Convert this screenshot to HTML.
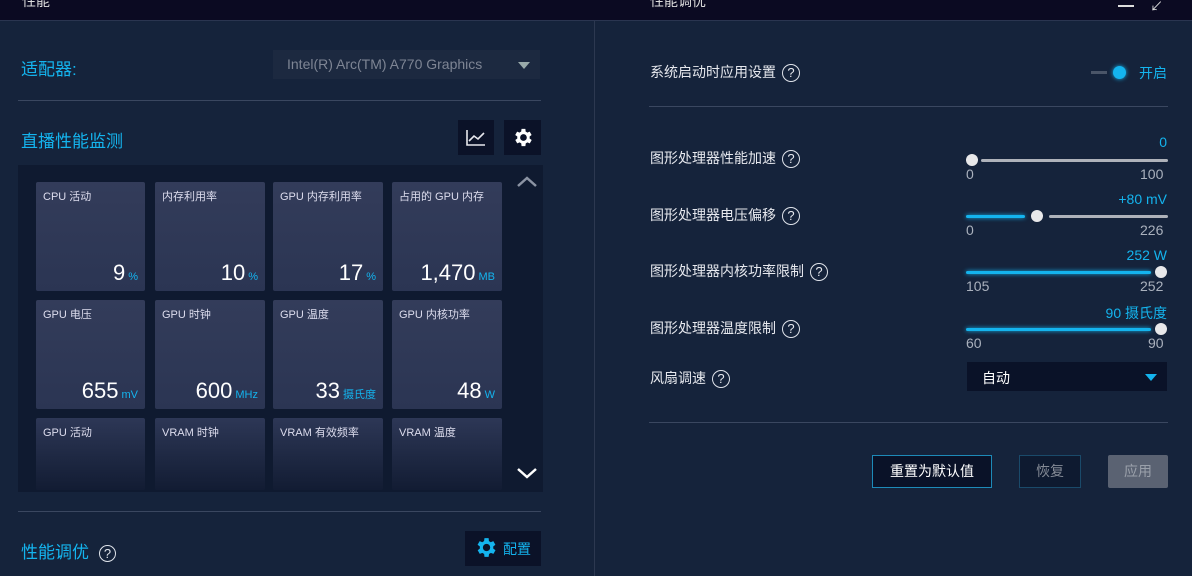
<!DOCTYPE html>
<html><head><meta charset="utf-8"><style>
*{margin:0;padding:0;box-sizing:border-box}
body{width:1192px;height:576px;background:#15233b;font-family:"Liberation Sans","Noto Sans CJK SC",sans-serif;color:#e6e8ee;position:relative;overflow:hidden}
.a{position:absolute}
.hdr{left:0;top:0;width:1192px;height:21px;background:#0b0a22;border-bottom:1px solid #2a3550}
.cy{color:#14b4ee}
.tile{position:absolute;width:110px;height:109px;background:linear-gradient(#333c5a,#2b3553);border-radius:2px}
.tile .t{position:absolute;left:7px;top:6px;font-size:11px;color:#dde}
.tile .v{position:absolute;right:7px;bottom:5px;font-size:22px;color:#fff;white-space:nowrap}
.tile .v span{font-size:11px;color:#14b4ee;margin-left:3px}
.fade{background:linear-gradient(#2d3756,#121c33)}
.lbl{position:absolute;left:650px;font-size:14px;color:#e6e8ee}
.q{display:inline-block;width:18px;height:18px;border:1.5px solid #dfe3ea;border-radius:50%;text-align:center;font-size:13px;line-height:16px;margin-left:6px;vertical-align:middle}
.trk{position:absolute;height:3px;background:#aeb2ba;border-radius:2px}
.on{background:#14b4ee;box-shadow:0 0 4px #14b4ee}
.knob{position:absolute;width:12px;height:12px;border-radius:50%;background:#e8e8ea}
.n{position:absolute;font-size:14px;color:#aab1bd}
.nv{position:absolute;font-size:14px;color:#14b4ee;text-align:right;right:25px}
.line{position:absolute;height:1px;background:#3a4760}
</style></head><body>
<div class="a hdr"></div>
<div class="a" style="left:22px;top:-9px;font-size:14px;color:#ddd">性能</div>
<div class="a" style="left:650px;top:-9px;font-size:14px;color:#ddd">性能调优</div>
<div class="a" style="left:1118px;top:5px;width:16px;height:2px;background:#ddd"></div>
<div class="a" style="left:1150px;top:-4px;font-size:13px;color:#ddd">↙</div>
<div class="a" style="left:594px;top:21px;width:1px;height:555px;background:#2c3850"></div>

<div class="a cy" style="left:21px;top:55px;font-size:17px">适配器:</div>
<div class="a" style="left:273px;top:50px;width:267px;height:29px;background:#1c2940"></div>
<div class="a" style="left:287px;top:56px;font-size:14px;color:#7e8594">Intel(R) Arc(TM) A770 Graphics</div>
<div class="a" style="left:518px;top:62px;border-left:6px solid transparent;border-right:6px solid transparent;border-top:7px solid #9aa"></div>
<div class="line" style="left:18px;top:100px;width:523px"></div>

<div class="a cy" style="left:21px;top:127px;font-size:17px">直播性能监测</div>
<div class="a" style="left:458px;top:120px;width:36px;height:35px;background:#0b1228"></div>
<svg class="a" style="left:465px;top:128px" width="22" height="20" viewBox="0 0 22 20"><path d="M2 2V17H20M4 13l5-5 4 3 6-6" stroke="#e8e8ee" stroke-width="1.6" fill="none"/></svg>
<div class="a" style="left:504px;top:120px;width:37px;height:35px;background:#0b1228"></div>
<svg class="a" style="left:511px;top:126px" width="23" height="23" viewBox="0 0 24 24"><path fill="#fff" d="M19.4 13a7.5 7.5 0 000-2l2.1-1.6-2-3.5-2.5 1a7 7 0 00-1.7-1L15 3h-4l-.4 2.9a7 7 0 00-1.7 1l-2.5-1-2 3.5L6.6 11a7.5 7.5 0 000 2l-2.1 1.6 2 3.5 2.5-1a7 7 0 001.7 1L11 21h4l.4-2.9a7 7 0 001.7-1l2.5 1 2-3.5zM13 15.5A3.5 3.5 0 1113 8.5a3.5 3.5 0 010 7z"/></svg>

<div class="a" style="left:18px;top:165px;width:525px;height:327px;background:#0f1a30"></div>
<svg class="a" style="left:516px;top:174px" width="22" height="14"><path d="M2 12l9-8 9 8" stroke="#8b93a3" stroke-width="2.5" fill="none"/></svg>
<svg class="a" style="left:516px;top:466px" width="22" height="14"><path d="M2 3l9 8 9-8" stroke="#fff" stroke-width="2.5" fill="none"/></svg>

<div class="tile" style="left:36px;top:182px;width:109px"><div class="t">CPU 活动</div><div class="v">9<span>%</span></div></div>
<div class="tile" style="left:155px;top:182px"><div class="t">内存利用率</div><div class="v">10<span>%</span></div></div>
<div class="tile" style="left:273px;top:182px"><div class="t">GPU 内存利用率</div><div class="v">17<span>%</span></div></div>
<div class="tile" style="left:392px;top:182px"><div class="t">占用的 GPU 内存</div><div class="v">1,470<span>MB</span></div></div>
<div class="tile" style="left:36px;top:300px;width:109px"><div class="t">GPU 电压</div><div class="v">655<span>mV</span></div></div>
<div class="tile" style="left:155px;top:300px"><div class="t">GPU 时钟</div><div class="v">600<span>MHz</span></div></div>
<div class="tile" style="left:273px;top:300px"><div class="t">GPU 温度</div><div class="v">33<span>摄氏度</span></div></div>
<div class="tile" style="left:392px;top:300px"><div class="t">GPU 内核功率</div><div class="v">48<span>W</span></div></div>
<div class="tile fade" style="left:36px;top:418px;width:109px;height:72px"><div class="t">GPU 活动</div></div>
<div class="tile fade" style="left:155px;top:418px;height:72px"><div class="t">VRAM 时钟</div></div>
<div class="tile fade" style="left:273px;top:418px;height:72px"><div class="t">VRAM 有效频率</div></div>
<div class="tile fade" style="left:392px;top:418px;height:72px"><div class="t">VRAM 温度</div></div>

<div class="line" style="left:18px;top:511px;width:523px"></div>
<div class="a cy" style="left:21px;top:538px;font-size:17px">性能调优<span class="q" style="color:#dfe3ea;margin-left:10px;width:17px;height:17px;line-height:15px">?</span></div>
<div class="a" style="left:465px;top:531px;width:76px;height:35px;background:#0b1228"></div>
<svg class="a" style="left:473px;top:535px" width="25" height="25" viewBox="0 0 24 24"><path fill="#14b4ee" d="M19.4 13a7.5 7.5 0 000-2l2.1-1.6-2-3.5-2.5 1a7 7 0 00-1.7-1L15 3h-4l-.4 2.9a7 7 0 00-1.7 1l-2.5-1-2 3.5L6.6 11a7.5 7.5 0 000 2l-2.1 1.6 2 3.5 2.5-1a7 7 0 001.7 1L11 21h4l.4-2.9a7 7 0 001.7-1l2.5 1 2-3.5zM13 15.5A3.5 3.5 0 1113 8.5a3.5 3.5 0 010 7z"/></svg>
<div class="a cy" style="left:503px;top:539px;font-size:14px">配置</div>

<!-- right -->
<div class="lbl" style="top:62px">系统启动时应用设置<span class="q">?</span></div>
<div class="a" style="left:1091px;top:71px;width:16px;height:3px;background:#4a5568"></div>
<div class="a" style="left:1113px;top:66px;width:13px;height:13px;border-radius:50%;background:#14b4ee;box-shadow:0 0 4px #14b4ee"></div>
<div class="a cy" style="left:1139px;top:63px;font-size:14px">开启</div>
<div class="line" style="left:649px;top:106px;width:519px"></div>

<div class="lbl" style="top:148px">图形处理器性能加速<span class="q">?</span></div>
<div class="nv" style="top:134px">0</div>
<div class="knob" style="left:966px;top:154px"></div>
<div class="trk" style="left:981px;top:159px;width:187px"></div>
<div class="n" style="left:966px;top:166px">0</div><div class="n" style="left:1140px;top:166px">100</div>

<div class="lbl" style="top:205px">图形处理器电压偏移<span class="q">?</span></div>
<div class="nv" style="top:191px">+80 mV</div>
<div class="trk on" style="left:966px;top:215px;width:59px"></div>
<div class="knob" style="left:1031px;top:210px"></div>
<div class="trk" style="left:1049px;top:215px;width:119px"></div>
<div class="n" style="left:966px;top:222px">0</div><div class="n" style="left:1140px;top:222px">226</div>

<div class="lbl" style="top:261px">图形处理器内核功率限制<span class="q">?</span></div>
<div class="nv" style="top:247px">252 W</div>
<div class="trk on" style="left:966px;top:271px;width:185px"></div>
<div class="knob" style="left:1155px;top:266px"></div>
<div class="n" style="left:966px;top:278px">105</div><div class="n" style="left:1140px;top:278px">252</div>

<div class="lbl" style="top:318px">图形处理器温度限制<span class="q">?</span></div>
<div class="nv" style="top:303px">90 摄氏度</div>
<div class="trk on" style="left:966px;top:328px;width:185px"></div>
<div class="knob" style="left:1155px;top:323px"></div>
<div class="n" style="left:966px;top:335px">60</div><div class="n" style="left:1148px;top:335px">90</div>

<div class="lbl" style="top:368px">风扇调速<span class="q">?</span></div>
<div class="a" style="left:967px;top:362px;width:200px;height:29px;background:#0a1228"></div>
<div class="a" style="left:982px;top:368px;font-size:14px;color:#fff">自动</div>
<div class="a" style="left:1145px;top:374px;border-left:6px solid transparent;border-right:6px solid transparent;border-top:7px solid #14b4ee"></div>
<div class="line" style="left:649px;top:422px;width:519px"></div>

<div class="a" style="left:872px;top:455px;width:120px;height:33px;background:#0a1228;border:1.5px solid #1d8ab8;font-size:14px;color:#fff;text-align:center;line-height:30px">重置为默认值</div>
<div class="a" style="left:1019px;top:455px;width:62px;height:33px;background:#0e1a30;border:1.5px solid #1a4a6a;font-size:14px;color:#858b96;text-align:center;line-height:30px">恢复</div>
<div class="a" style="left:1108px;top:455px;width:60px;height:33px;background:#5a6272;font-size:14px;color:#9aa0aa;text-align:center;line-height:33px;border-radius:2px">应用</div>
</body></html>
